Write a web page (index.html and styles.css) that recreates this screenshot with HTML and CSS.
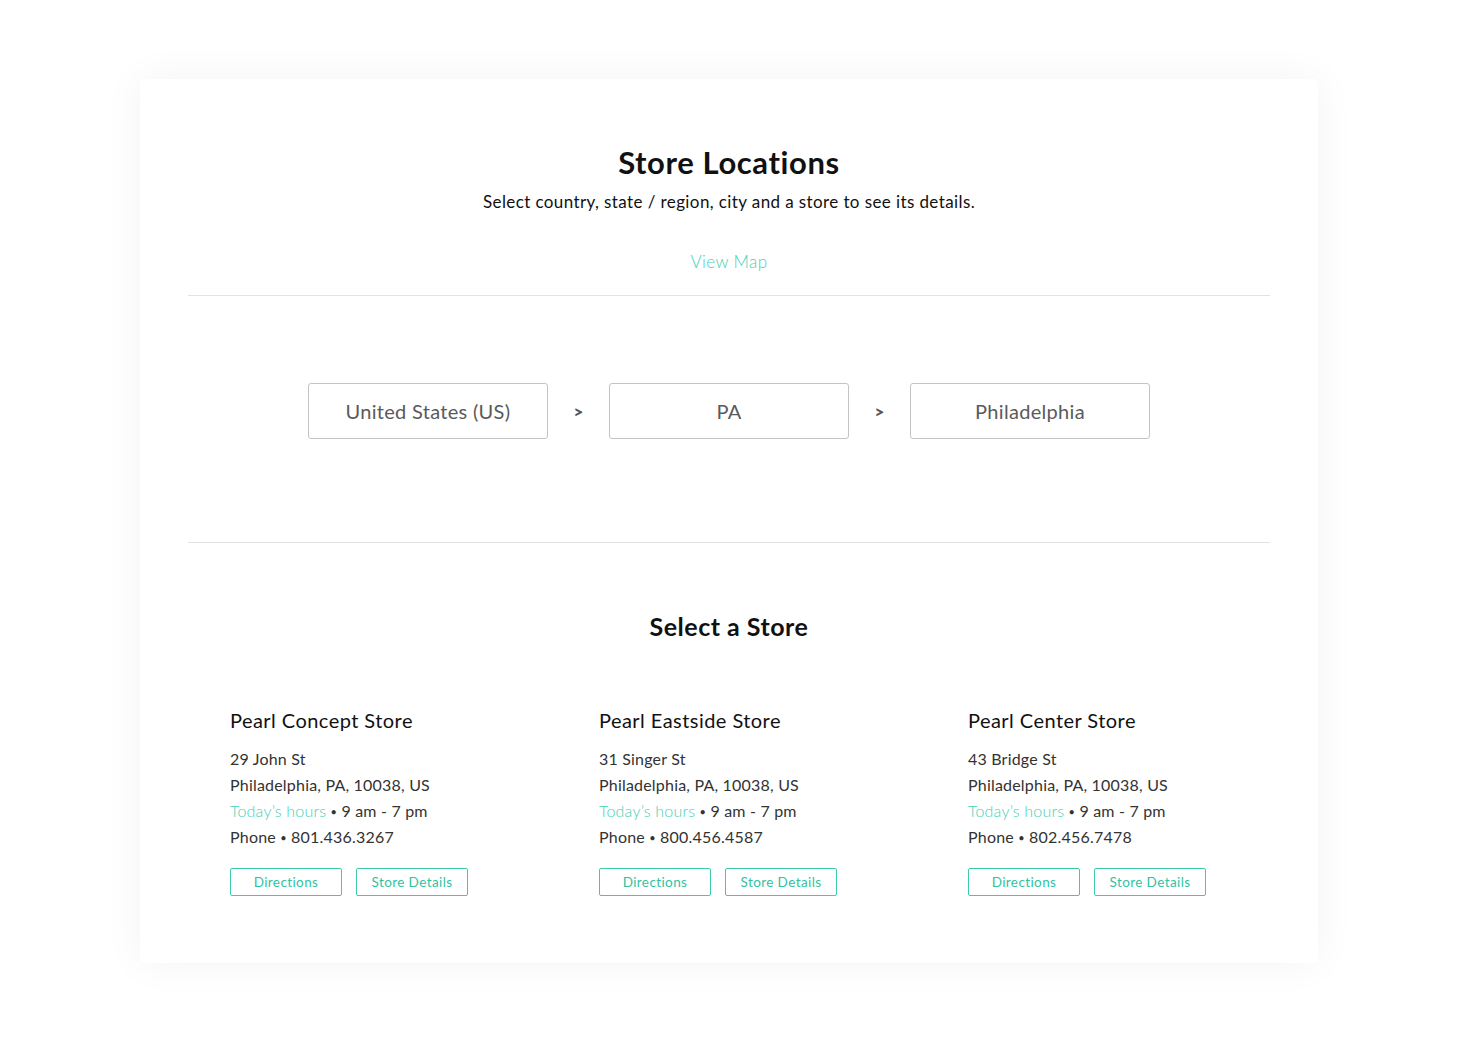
FILE: index.html
```html
<!DOCTYPE html>
<html>
<head>
<meta charset="utf-8">
<link rel="stylesheet" href="styles.css">
</head>
<body>
<main class="card">
  <header class="head">
    <h1 class="title">Store Locations</h1>
    <p class="subtitle">Select country, state / region, city and a store to see its details.</p>
    <a class="view-map" href="#">View Map</a>
  </header>
  <hr class="divider">
  <section class="selects">
    <div class="select">United States (US)</div>
    <span class="sep">&gt;</span>
    <div class="select">PA</div>
    <span class="sep">&gt;</span>
    <div class="select">Philadelphia</div>
  </section>
  <hr class="divider">
  <h2 class="section-title">Select a Store</h2>
  <section class="stores">
    <article class="store">
      <h3 class="store-name">Pearl Concept Store</h3>
      <p class="line">29 John St</p>
      <p class="line">Philadelphia, PA, 10038, US</p>
      <p class="line"><span class="hl">Today’s hours</span> <span class="dot">•</span> 9 am - 7 pm</p>
      <p class="line">Phone <span class="dot">•</span> 801.436.3267</p>
      <div class="actions"><a class="btn" href="#">Directions</a><a class="btn" href="#">Store Details</a></div>
    </article>
    <article class="store">
      <h3 class="store-name">Pearl Eastside Store</h3>
      <p class="line">31 Singer St</p>
      <p class="line">Philadelphia, PA, 10038, US</p>
      <p class="line"><span class="hl">Today’s hours</span> <span class="dot">•</span> 9 am - 7 pm</p>
      <p class="line">Phone <span class="dot">•</span> 800.456.4587</p>
      <div class="actions"><a class="btn" href="#">Directions</a><a class="btn" href="#">Store Details</a></div>
    </article>
    <article class="store">
      <h3 class="store-name">Pearl Center Store</h3>
      <p class="line">43 Bridge St</p>
      <p class="line">Philadelphia, PA, 10038, US</p>
      <p class="line"><span class="hl">Today’s hours</span> <span class="dot">•</span> 9 am - 7 pm</p>
      <p class="line">Phone <span class="dot">•</span> 802.456.7478</p>
      <div class="actions"><a class="btn" href="#">Directions</a><a class="btn" href="#">Store Details</a></div>
    </article>
  </section>
</main>
</body>
</html>
```
FILE: styles.css
```css
* { box-sizing: border-box; }
html, body { margin: 0; padding: 0; background: #fff; }
body {
  font-family: "Lato", "Open Sans", sans-serif;
  color: #111;
  padding: 79px 0 79px 140px;
}
.card {
  width: 1178px;
  background: #fff;
  border-radius: 5px;
  box-shadow: 0 0 40px rgba(0,0,0,0.05);
  padding: 65px 48px 67px;
}
.head { display: flex; flex-direction: column; align-items: center; }
.title {
  margin: 0;
  font-size: 31px;
  line-height: 36px;
  font-weight: 700;
  letter-spacing: 0.6px;
}
.subtitle {
  margin: 10px 0 0;
  font-size: 17px;
  line-height: 24px;
  letter-spacing: 0.4px;
}
.view-map {
  margin-top: 36px;
  font-size: 17px;
  line-height: 24px;
  color: #45d0b3;
  text-decoration: none;
  font-weight: 300;
  letter-spacing: 0.4px;
}
.divider {
  border: 0;
  border-top: 1px solid #e3e3e3;
  margin: 21px 0 0;
}
.selects {
  display: flex;
  justify-content: center;
  align-items: center;
  margin: 87px 0 103px;
}
.select {
  width: 240px;
  height: 56px;
  border: 1px solid #c4c4c4;
  border-radius: 3px;
  display: flex;
  align-items: center;
  justify-content: center;
  font-size: 20px;
  letter-spacing: 0.3px;
  color: #5a5a5a;
}
.sep {
  width: 61px;
  text-align: center;
  font-size: 17px;
  font-weight: 900;
  color: #555;
}
.selects + .divider { margin-top: 0; }
.section-title {
  margin: 68px 0 0;
  text-align: center;
  font-size: 25px;
  line-height: 30px;
  font-weight: 700;
  letter-spacing: 0.5px;
}
.stores {
  display: grid;
  grid-template-columns: repeat(3, 369px);
  margin: 66px 0 0 42px;
}
.store-name {
  margin: 0 0 13px;
  font-size: 20px;
  line-height: 26px;
  font-weight: 400;
  letter-spacing: 0.45px;
  color: #111;
}
.line {
  margin: 0;
  height: 26px;
  font-size: 16px;
  line-height: 26px;
  letter-spacing: 0.2px;
  color: #333;
}
.dot { font-size: 11px; line-height: 0; vertical-align: 1px; }
.hl { color: #45d0b3; font-weight: 300; }
.actions { display: flex; gap: 14px; margin-top: 18px; }
.btn {
  width: 112px;
  height: 28px;
  border: 1px solid #3fcbaa;
  border-radius: 2px;
  display: flex;
  align-items: center;
  justify-content: center;
  font-size: 13.5px;
  letter-spacing: 0.4px;
  color: #2fc3a2;
  text-decoration: none;
}
```
